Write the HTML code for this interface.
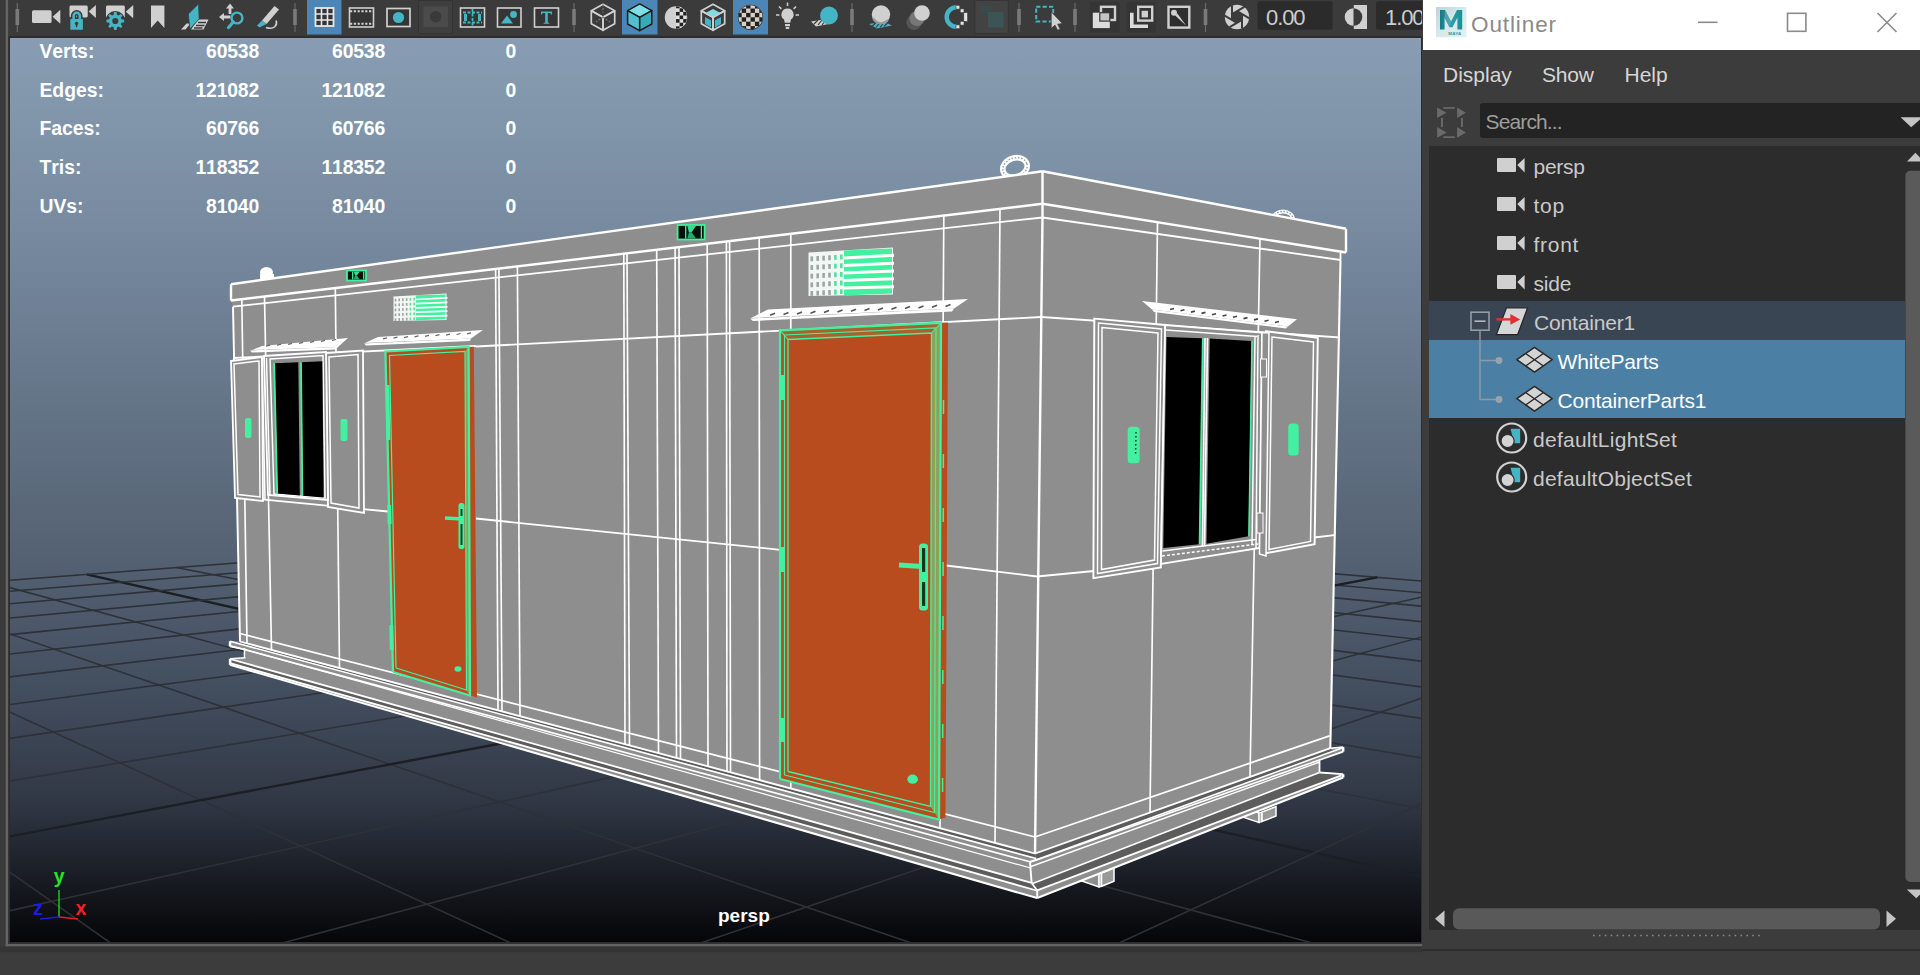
<!DOCTYPE html>
<html><head><meta charset="utf-8"><title>Maya Outliner</title>
<style>
html,body{margin:0;padding:0;background:#3c3c3c;}
body{width:1920px;height:975px;overflow:hidden;position:relative;font-family:"Liberation Sans",sans-serif;}
#root{position:absolute;left:0;top:0;width:1920px;height:975px;overflow:hidden;background:#3c3c3c;}
#scene{position:absolute;left:0;top:0;}
.hr{position:absolute;left:0;width:1920px;height:24px;color:#fff;font-weight:bold;font-size:19.4px;line-height:24px;font-kerning:none;}
.hl{position:absolute;left:39.4px;}
.hv{position:absolute;letter-spacing:-0.2px;}
#persp{position:absolute;left:718px;top:903.5px;color:#fff;font-weight:bold;font-size:19px;line-height:24px;}
</style></head><body>
<div id="root">
<svg id="scene" width="1423" height="975" viewBox="0 0 1423 975">
<defs>
<linearGradient id="bg" x1="0" y1="0" x2="0" y2="1">
<stop offset="0.0000" stop-color="#889db3"/><stop offset="0.2124" stop-color="#778aa0"/><stop offset="0.5442" stop-color="#576576"/><stop offset="0.6659" stop-color="#4a5667"/><stop offset="0.7544" stop-color="#3e4858"/><stop offset="0.8429" stop-color="#313845"/><stop offset="0.8982" stop-color="#212630"/><stop offset="0.9535" stop-color="#12141a"/><stop offset="1.0000" stop-color="#060608"/>
</linearGradient>
<clipPath id="vpclip"><rect x="10" y="38" width="1411" height="904"/></clipPath>
</defs>
<rect x="0" y="0" width="1423" height="975" fill="#3c3c3c"/>
<rect x="0" y="0" width="5.7" height="952" fill="#3a3a3a"/>
<rect x="5.7" y="0" width="2.6" height="946.5" fill="#656565"/>
<rect x="8.3" y="0" width="1415" height="38" fill="#3b3b3b"/>
<rect x="8.3" y="36" width="1415" height="908" fill="#2d2d2d"/>
<rect x="10" y="38" width="1411" height="904" fill="url(#bg)"/>
<g clip-path="url(#vpclip)">
<line x1="-1543.9" y1="699.5" x2="-22206.3" y2="7475.3" stroke="#2e3137" stroke-width="1.6"/>
<line x1="-1279.4" y1="679.2" x2="-18425.2" y2="8117.8" stroke="#2e3137" stroke-width="1.6"/>
<line x1="-1049.1" y1="661.5" x2="-13885.5" y2="8889.2" stroke="#2e3137" stroke-width="1.6"/>
<line x1="-846.8" y1="646.0" x2="-8333.4" y2="9832.6" stroke="#2e3137" stroke-width="1.6"/>
<line x1="-667.6" y1="632.3" x2="-1031.1" y2="5872.6" stroke="#2e3137" stroke-width="1.6"/>
<line x1="-507.9" y1="620.0" x2="3300.7" y2="6249.1" stroke="#2e3137" stroke-width="1.6"/>
<line x1="-364.6" y1="609.0" x2="8276.2" y2="6681.5" stroke="#2e3137" stroke-width="1.6"/>
<line x1="-235.2" y1="599.1" x2="14050.2" y2="7183.2" stroke="#2e3137" stroke-width="1.6"/>
<line x1="-118.0" y1="590.1" x2="20831.7" y2="7772.6" stroke="#2e3137" stroke-width="1.6"/>
<line x1="-11.1" y1="581.9" x2="8735.9" y2="2969.0" stroke="#2e3137" stroke-width="1.6"/>
<line x1="86.6" y1="574.4" x2="6188.6" y2="1957.4" stroke="#1c1f24" stroke-width="2.4"/>
<line x1="176.3" y1="567.5" x2="5083.0" y2="1518.4" stroke="#2e3137" stroke-width="1.6"/>
<line x1="259.0" y1="561.2" x2="4465.2" y2="1273.0" stroke="#2e3137" stroke-width="1.6"/>
<line x1="335.5" y1="555.3" x2="4070.6" y2="1116.3" stroke="#2e3137" stroke-width="1.6"/>
<line x1="406.3" y1="549.9" x2="3796.9" y2="1007.6" stroke="#2e3137" stroke-width="1.6"/>
<line x1="472.2" y1="544.8" x2="3595.8" y2="927.7" stroke="#2e3137" stroke-width="1.6"/>
<line x1="533.7" y1="540.1" x2="3441.8" y2="866.6" stroke="#2e3137" stroke-width="1.6"/>
<line x1="591.1" y1="535.7" x2="3320.2" y2="818.3" stroke="#2e3137" stroke-width="1.6"/>
<line x1="644.8" y1="531.6" x2="3221.6" y2="779.1" stroke="#2e3137" stroke-width="1.6"/>
<line x1="695.2" y1="527.7" x2="3140.2" y2="746.8" stroke="#2e3137" stroke-width="1.6"/>
<line x1="742.6" y1="524.1" x2="3071.7" y2="719.6" stroke="#2e3137" stroke-width="1.6"/>
<line x1="-1543.9" y1="699.5" x2="742.6" y2="524.1" stroke="#2e3137" stroke-width="1.6"/>
<line x1="-1619.0" y1="724.1" x2="787.7" y2="527.9" stroke="#2e3137" stroke-width="1.6"/>
<line x1="-1708.0" y1="753.3" x2="835.7" y2="531.9" stroke="#2e3137" stroke-width="1.6"/>
<line x1="-1815.1" y1="788.4" x2="887.0" y2="536.2" stroke="#2e3137" stroke-width="1.6"/>
<line x1="-1946.3" y1="831.4" x2="942.0" y2="540.8" stroke="#2e3137" stroke-width="1.6"/>
<line x1="-2110.8" y1="885.4" x2="1001.1" y2="545.8" stroke="#2e3137" stroke-width="1.6"/>
<line x1="-2323.3" y1="955.1" x2="1064.8" y2="551.1" stroke="#2e3137" stroke-width="1.6"/>
<line x1="-2608.2" y1="1048.5" x2="1133.5" y2="556.9" stroke="#2e3137" stroke-width="1.6"/>
<line x1="-3010.3" y1="1180.4" x2="1208.0" y2="563.1" stroke="#2e3137" stroke-width="1.6"/>
<line x1="-3620.3" y1="1380.4" x2="1288.9" y2="569.9" stroke="#2e3137" stroke-width="1.6"/>
<line x1="-4656.2" y1="1720.1" x2="1377.3" y2="577.4" stroke="#1c1f24" stroke-width="2.4"/>
<line x1="-6802.4" y1="2423.9" x2="1474.0" y2="585.5" stroke="#2e3137" stroke-width="1.6"/>
<line x1="-13906.9" y1="4753.7" x2="1580.4" y2="594.4" stroke="#2e3137" stroke-width="1.6"/>
<line x1="-19759.9" y1="7891.0" x2="1698.1" y2="604.3" stroke="#2e3137" stroke-width="1.6"/>
<line x1="-15496.7" y1="8615.4" x2="1828.8" y2="615.3" stroke="#2e3137" stroke-width="1.6"/>
<line x1="-10316.8" y1="9495.6" x2="1974.9" y2="627.5" stroke="#2e3137" stroke-width="1.6"/>
<line x1="-1031.1" y1="5872.6" x2="2139.4" y2="641.3" stroke="#2e3137" stroke-width="1.6"/>
<line x1="3300.7" y1="6249.1" x2="2325.8" y2="657.0" stroke="#2e3137" stroke-width="1.6"/>
<line x1="8276.2" y1="6681.5" x2="2538.8" y2="674.9" stroke="#2e3137" stroke-width="1.6"/>
<line x1="14050.2" y1="7183.2" x2="2784.7" y2="695.5" stroke="#2e3137" stroke-width="1.6"/>
<line x1="20831.7" y1="7772.6" x2="3071.7" y2="719.6" stroke="#2e3137" stroke-width="1.6"/>
<polygon points="1081.0,868.0 1099.0,874.0 1099.0,887.0 1081.0,880.7" fill="#8e8e8e" stroke="#ffffff" stroke-width="1.5" />
<polygon points="1099.0,874.0 1101.5,873.0 1101.5,886.3 1099.0,887.0" fill="#b5b5b5" stroke="#ffffff" stroke-width="1.2" />
<polygon points="1101.5,873.0 1114.0,868.0 1114.0,881.2 1101.5,886.3" fill="#999" stroke="#ffffff" stroke-width="1.5" />
<polygon points="1238.0,806.0 1259.0,813.0 1259.0,822.5 1238.0,815.5" fill="#8e8e8e" stroke="#ffffff" stroke-width="1.5" />
<polygon points="1259.0,813.0 1262.0,812.0 1262.0,821.5 1259.0,822.5" fill="#b5b5b5" stroke="#ffffff" stroke-width="1.2" />
<polygon points="1262.0,812.0 1276.0,806.5 1276.0,816.0 1262.0,821.5" fill="#999" stroke="#ffffff" stroke-width="1.5" />
<polygon points="240.0,641.5 1035.0,853.5 1330.3,748.2 1343.2,747.1 1343.2,751.6 1319.5,760.6 1319.5,772.0 1343.2,774.2 1343.2,777.5 1037.2,898.1 230.0,664.8 230.0,658.8 245.5,657.7 245.0,649.5 230.0,646.5 230.0,641.3" fill="#8e8e8e" stroke="none" stroke-width="1.5" />
<polygon points="1035.5,854.5 1330.5,749.0 1335.0,751.6 1037.2,859.5" fill="#5c5c5c" stroke="none" stroke-width="1.5" />
<polygon points="1032.7,883.5 1319.5,772.5 1341.5,775.3 1037.2,890.3" fill="#5c5c5c" stroke="none" stroke-width="1.5" />
<polygon points="232.0,659.6 1031.6,883.0 1036.5,890.5 232.0,663.0" fill="#5c5c5c" stroke="none" stroke-width="1.5" />
<polygon points="240.0,642.3 1035.0,854.5 1036.0,857.6 236.0,642.6" fill="#5c5c5c" stroke="none" stroke-width="1.5" />
<line x1="230.0" y1="641.3" x2="1036.0" y2="858.5" stroke="#ffffff" stroke-width="1.65" />
<line x1="230.0" y1="645.7" x2="1030.0" y2="861.8" stroke="#ffffff" stroke-width="1.65" />
<line x1="244.5" y1="649.5" x2="1030.5" y2="868.0" stroke="#ffffff" stroke-width="1.2" />
<line x1="230.0" y1="659.0" x2="1031.6" y2="882.8" stroke="#ffffff" stroke-width="1.8" />
<line x1="230.0" y1="663.2" x2="1036.5" y2="890.5" stroke="#ffffff" stroke-width="1.8" />
<line x1="230.0" y1="664.8" x2="1037.2" y2="898.1" stroke="#ffffff" stroke-width="2.1" />
<line x1="230.0" y1="641.3" x2="230.0" y2="646.5" stroke="#ffffff" stroke-width="2.4" />
<line x1="230.0" y1="658.8" x2="230.0" y2="664.8" stroke="#ffffff" stroke-width="2.4" />
<line x1="230.0" y1="658.8" x2="245.5" y2="657.7" stroke="#ffffff" stroke-width="1.65" />
<line x1="230.0" y1="646.5" x2="245.0" y2="649.5" stroke="#ffffff" stroke-width="1.5" />
<line x1="244.5" y1="648.0" x2="244.5" y2="658.0" stroke="#ffffff" stroke-width="1.65" />
<line x1="1030.0" y1="861.8" x2="1031.6" y2="883.0" stroke="#ffffff" stroke-width="1.95" />
<line x1="1031.6" y1="883.0" x2="1037.2" y2="890.5" stroke="#ffffff" stroke-width="1.8" />
<line x1="1037.2" y1="890.5" x2="1037.2" y2="898.1" stroke="#ffffff" stroke-width="1.95" />
<line x1="1030.0" y1="861.5" x2="1037.2" y2="859.6" stroke="#ffffff" stroke-width="1.8" />
<line x1="1037.2" y1="859.6" x2="1343.2" y2="747.6" stroke="#ffffff" stroke-width="1.65" />
<line x1="1030.0" y1="862.3" x2="1343.2" y2="751.6" stroke="#ffffff" stroke-width="1.65" />
<line x1="1031.0" y1="866.5" x2="1319.5" y2="762.0" stroke="#ffffff" stroke-width="1.35" />
<line x1="1032.7" y1="883.5" x2="1319.5" y2="772.5" stroke="#ffffff" stroke-width="1.8" />
<line x1="1037.2" y1="890.3" x2="1341.5" y2="775.3" stroke="#ffffff" stroke-width="1.8" />
<line x1="1037.2" y1="898.1" x2="1343.2" y2="777.5" stroke="#ffffff" stroke-width="2.1" />
<line x1="1343.2" y1="747.1" x2="1343.2" y2="751.6" stroke="#ffffff" stroke-width="2.4" />
<line x1="1343.2" y1="774.2" x2="1343.2" y2="777.5" stroke="#ffffff" stroke-width="2.4" />
<line x1="1319.5" y1="760.6" x2="1319.5" y2="772.0" stroke="#ffffff" stroke-width="1.8" />
<line x1="1319.5" y1="772.5" x2="1343.2" y2="774.2" stroke="#ffffff" stroke-width="1.8" />
<line x1="1330.3" y1="748.2" x2="1343.2" y2="747.1" stroke="#ffffff" stroke-width="1.65" />
<polygon points="233.0,306.7 1042.5,217.5 1035.0,853.5 240.0,641.5" fill="#8e8e8e" stroke="none" stroke-width="1.5" />
<polygon points="1042.5,217.5 1340.5,260.0 1330.3,748.2 1035.0,853.5" fill="#8e8e8e" stroke="none" stroke-width="1.5" />
<polygon points="231.0,284.2 1042.5,171.3 1346.0,228.8 1346.0,252.5 1340.5,253.0 1340.5,260.0 1042.5,217.5 233.0,306.7 231.0,300.5" fill="#8e8e8e" stroke="none" stroke-width="1.5" />
<g transform="rotate(-18 1015.0 167.5)"><ellipse cx="1015.0" cy="167.5" rx="12.5" ry="9.5" fill="none" stroke="#fff" stroke-width="5.6"/><ellipse cx="1015.0" cy="167.5" rx="12.5" ry="9.5" fill="none" stroke="#9aa0a8" stroke-width="1.4" stroke-dasharray="1.6 1.6"/></g>
<g transform="rotate(0 1283.0 219.0)"><ellipse cx="1283.0" cy="219.0" rx="10.0" ry="7.5" fill="none" stroke="#fff" stroke-width="3.8"/><ellipse cx="1283.0" cy="219.0" rx="10.0" ry="7.5" fill="none" stroke="#9aa0a8" stroke-width="1.4" stroke-dasharray="1.6 1.6"/></g>
<ellipse cx="266.5" cy="272.5" rx="6.5" ry="5.5" fill="#fff"/><rect x="260" y="274" width="14" height="5" fill="#fff"/>
<polygon points="231.0,284.2 1042.5,171.3 1346.0,228.8 1346.0,252.5 1042.5,203.8 231.0,300.5" fill="#8e8e8e" stroke="none" stroke-width="1.5" />
<line x1="231.0" y1="284.2" x2="1042.5" y2="171.3" stroke="#ffffff" stroke-width="2.4" />
<line x1="231.0" y1="300.5" x2="1042.5" y2="203.8" stroke="#ffffff" stroke-width="2.4" />
<line x1="233.0" y1="306.7" x2="1042.5" y2="217.5" stroke="#ffffff" stroke-width="1.8" />
<line x1="1042.5" y1="171.3" x2="1346.0" y2="228.8" stroke="#ffffff" stroke-width="2.4" />
<line x1="1042.5" y1="203.8" x2="1346.0" y2="252.5" stroke="#ffffff" stroke-width="2.4" />
<line x1="1042.5" y1="217.5" x2="1340.5" y2="260.0" stroke="#ffffff" stroke-width="1.8" />
<line x1="231.0" y1="284.2" x2="231.0" y2="300.5" stroke="#ffffff" stroke-width="2.4" />
<line x1="1346.0" y1="228.8" x2="1346.0" y2="252.5" stroke="#ffffff" stroke-width="2.4" />
<line x1="1042.5" y1="171.3" x2="1042.5" y2="217.5" stroke="#ffffff" stroke-width="2.4" />
<line x1="233.0" y1="306.7" x2="240.0" y2="641.5" stroke="#ffffff" stroke-width="1.95" />
<line x1="1042.5" y1="217.5" x2="1035.0" y2="853.5" stroke="#ffffff" stroke-width="2.4" />
<line x1="1340.5" y1="260.0" x2="1330.3" y2="748.2" stroke="#ffffff" stroke-width="2.1" />
<line x1="240.0" y1="641.5" x2="1035.0" y2="853.5" stroke="#ffffff" stroke-width="1.8" />
<line x1="1035.0" y1="853.5" x2="1330.3" y2="748.2" stroke="#ffffff" stroke-width="1.8" />
<line x1="240.0" y1="633.5" x2="1035.0" y2="837.0" stroke="#ffffff" stroke-width="1.8" />
<line x1="1035.0" y1="837.0" x2="1329.5" y2="735.8" stroke="#ffffff" stroke-width="1.8" />
<line x1="1340.5" y1="253.0" x2="1340.5" y2="260.0" stroke="#ffffff" stroke-width="1.8" />
<line x1="241.8" y1="299.2" x2="247.0" y2="643.4" stroke="#ffffff" stroke-width="1.65" />
<line x1="264.5" y1="296.5" x2="271.5" y2="649.9" stroke="#ffffff" stroke-width="1.65" />
<line x1="335.3" y1="288.1" x2="339.5" y2="668.0" stroke="#ffffff" stroke-width="1.65" />
<line x1="495.6" y1="269.0" x2="498.0" y2="710.3" stroke="#ffffff" stroke-width="1.65" />
<line x1="498.9" y1="268.6" x2="502.0" y2="711.4" stroke="#ffffff" stroke-width="1.65" />
<line x1="517.4" y1="266.4" x2="520.0" y2="716.2" stroke="#ffffff" stroke-width="1.65" />
<line x1="623.8" y1="253.7" x2="625.0" y2="744.2" stroke="#ffffff" stroke-width="1.65" />
<line x1="627.0" y1="253.3" x2="629.5" y2="745.4" stroke="#ffffff" stroke-width="1.65" />
<line x1="656.7" y1="249.8" x2="658.5" y2="753.1" stroke="#ffffff" stroke-width="1.65" />
<line x1="675.1" y1="247.6" x2="676.5" y2="757.9" stroke="#ffffff" stroke-width="1.65" />
<line x1="679.0" y1="247.1" x2="680.5" y2="759.0" stroke="#ffffff" stroke-width="1.65" />
<line x1="707.2" y1="243.8" x2="708.0" y2="766.3" stroke="#ffffff" stroke-width="1.65" />
<line x1="726.4" y1="241.5" x2="727.0" y2="771.4" stroke="#ffffff" stroke-width="1.65" />
<line x1="729.6" y1="241.1" x2="730.5" y2="772.3" stroke="#ffffff" stroke-width="1.65" />
<line x1="759.2" y1="237.6" x2="759.6" y2="780.1" stroke="#ffffff" stroke-width="1.65" />
<line x1="790.8" y1="233.8" x2="790.8" y2="788.4" stroke="#ffffff" stroke-width="1.65" />
<line x1="943.8" y1="215.6" x2="940.0" y2="828.2" stroke="#ffffff" stroke-width="1.65" />
<line x1="1000.0" y1="208.9" x2="995.0" y2="842.8" stroke="#ffffff" stroke-width="1.65" />
<line x1="1157.5" y1="222.3" x2="1150.0" y2="812.5" stroke="#ffffff" stroke-width="1.65" />
<line x1="1260.0" y1="238.7" x2="1250.0" y2="776.8" stroke="#ffffff" stroke-width="1.65" />
<line x1="233.0" y1="358.0" x2="476.0" y2="346.0" stroke="#ffffff" stroke-width="1.8" />
<line x1="476.0" y1="346.5" x2="1041.5" y2="317.0" stroke="#ffffff" stroke-width="1.8" />
<line x1="1041.5" y1="317.0" x2="1340.0" y2="337.5" stroke="#ffffff" stroke-width="1.8" />
<line x1="238.0" y1="497.0" x2="388.0" y2="511.5" stroke="#ffffff" stroke-width="1.8" />
<line x1="476.0" y1="518.5" x2="780.0" y2="549.8" stroke="#ffffff" stroke-width="1.8" />
<line x1="946.0" y1="565.5" x2="1037.0" y2="576.5" stroke="#ffffff" stroke-width="1.8" />
<line x1="1037.0" y1="576.5" x2="1094.0" y2="571.0" stroke="#ffffff" stroke-width="1.8" />
<line x1="1314.0" y1="537.5" x2="1334.5" y2="535.2" stroke="#ffffff" stroke-width="1.8" />
<polygon points="231.0,361.0 262.0,357.0 263.0,501.0 235.0,498.0" fill="#8e8e8e" stroke="#ffffff" stroke-width="1.8" />
<polygon points="234.0,364.0 259.0,361.0 260.0,497.0 238.0,494.5" fill="none" stroke="#ffffff" stroke-width="1.5" />
<polygon points="326.0,353.0 363.0,350.5 364.0,513.0 328.0,507.0" fill="#8e8e8e" stroke="#ffffff" stroke-width="1.8" />
<polygon points="329.0,357.0 358.0,354.5 359.0,508.0 331.0,503.0" fill="none" stroke="#ffffff" stroke-width="1.5" />
<polygon points="264.0,356.0 326.0,352.0 328.0,500.0 268.0,495.0" fill="#8e8e8e" stroke="#ffffff" stroke-width="1.8" />
<polygon points="270.0,359.0 323.0,355.5 325.0,498.0 274.0,494.0" fill="none" stroke="#ffffff" stroke-width="1.5" />
<polygon points="274.6,363.3 298.3,362.3 299.8,495.5 277.5,493.5" fill="#000" stroke="none" stroke-width="1.5" />
<polygon points="301.4,362.3 322.3,361.2 323.6,497.5 302.8,495.8" fill="#000" stroke="none" stroke-width="1.5" />
<line x1="274.2" y1="363.3" x2="277.2" y2="493.5" stroke="#43f0a0" stroke-width="1.8" />
<line x1="301.0" y1="362.3" x2="302.4" y2="495.8" stroke="#43f0a0" stroke-width="1.8" />
<line x1="266.5" y1="358.0" x2="270.0" y2="496.0" stroke="#ffffff" stroke-width="1.5" />
<line x1="262.0" y1="358.0" x2="265.0" y2="500.0" stroke="#ffffff" stroke-width="1.5" />
<rect x="245" y="418" width="6.5" height="20" rx="2" fill="#43f0a0"/>
<rect x="340.5" y="419" width="7" height="22" rx="2" fill="#43f0a0"/>
<polygon points="252.0,350.0 262.0,346.0 348.0,338.0 338.0,347.0" fill="#ffffff" stroke="none" stroke-width="1.5" />
<polygon points="250.0,350.5 338.0,347.0 336.0,349.5 252.0,352.5" fill="#ffffff" stroke="none" stroke-width="1.5" />
<line x1="266.0" y1="346.2" x2="270.0" y2="345.2" stroke="#666" stroke-width="1.2" />
<line x1="277.0" y1="345.2" x2="281.0" y2="344.2" stroke="#666" stroke-width="1.2" />
<line x1="288.0" y1="344.3" x2="292.0" y2="343.3" stroke="#666" stroke-width="1.2" />
<line x1="299.0" y1="343.3" x2="303.0" y2="342.3" stroke="#666" stroke-width="1.2" />
<line x1="310.0" y1="342.4" x2="314.0" y2="341.4" stroke="#666" stroke-width="1.2" />
<line x1="321.0" y1="341.4" x2="325.0" y2="340.4" stroke="#666" stroke-width="1.2" />
<line x1="332.0" y1="340.5" x2="336.0" y2="339.5" stroke="#666" stroke-width="1.2" />
<polygon points="385.4,351.5 468.6,347.0 473.8,346.8 477.0,697.5 470.0,695.5 393.0,672.0" fill="#b84c1f" stroke="none" stroke-width="1.5" />
<polygon points="465.0,351.5 468.6,347.0 470.0,695.5 466.5,690.0" fill="#8fa05a" stroke="none" stroke-width="1.5" />
<polyline points="393.0,672.0 385.4,351.5 468.6,347.0 470.0,695.5 393.0,672.0" fill="none" stroke="#43f0a0" stroke-width="2.25" />
<polyline points="396.0,668.0 389.5,355.5 465.0,351.5 466.5,690.0 396.0,668.0" fill="none" stroke="#43f0a0" stroke-width="1.2" />
<line x1="387.5" y1="385.0" x2="388.3" y2="440.0" stroke="#43f0a0" stroke-width="3.9" />
<line x1="391.3" y1="625.0" x2="391.8" y2="650.0" stroke="#43f0a0" stroke-width="3.9" />
<line x1="389.2" y1="505.0" x2="389.6" y2="524.0" stroke="#43f0a0" stroke-width="3.9" />
<line x1="445.0" y1="518.0" x2="462.0" y2="519.0" stroke="#43f0a0" stroke-width="3.75" />
<rect x="458.5" y="503" width="6" height="46" rx="2.5" fill="#43f0a0"/>
<line x1="461.5" y1="509.0" x2="461.5" y2="516.0" stroke="#0a3a22" stroke-width="1.95" />
<line x1="461.5" y1="524.0" x2="461.5" y2="545.0" stroke="#0a3a22" stroke-width="1.95" />
<ellipse cx="458" cy="669" rx="3.5" ry="2.8" fill="#43f0a0"/>
<polygon points="365.0,343.0 378.0,337.0 483.0,330.0 471.0,338.5" fill="#ffffff" stroke="none" stroke-width="1.5" />
<polygon points="364.0,343.5 471.0,338.5 470.0,341.0 366.0,345.5" fill="#ffffff" stroke="none" stroke-width="1.5" />
<line x1="383.0" y1="338.8" x2="387.0" y2="337.8" stroke="#666" stroke-width="1.2" />
<line x1="393.5" y1="338.2" x2="397.5" y2="337.2" stroke="#666" stroke-width="1.2" />
<line x1="404.0" y1="337.6" x2="408.0" y2="336.6" stroke="#666" stroke-width="1.2" />
<line x1="414.5" y1="336.9" x2="418.5" y2="335.9" stroke="#666" stroke-width="1.2" />
<line x1="425.0" y1="336.3" x2="429.0" y2="335.3" stroke="#666" stroke-width="1.2" />
<line x1="435.5" y1="335.7" x2="439.5" y2="334.7" stroke="#666" stroke-width="1.2" />
<line x1="446.0" y1="335.1" x2="450.0" y2="334.1" stroke="#666" stroke-width="1.2" />
<line x1="456.5" y1="334.5" x2="460.5" y2="333.5" stroke="#666" stroke-width="1.2" />
<line x1="467.0" y1="333.8" x2="471.0" y2="332.8" stroke="#666" stroke-width="1.2" />
<g>
<polygon points="393.5,296.5 446.5,293.5 446.5,320.1 393.5,321.0" fill="#f4f6f5" stroke="none" stroke-width="1.5" />
<polygon points="415.8,295.2 445.5,294.5 445.5,319.1 415.8,320.6" fill="#43f0a0" stroke="none" stroke-width="1.5" />
<line x1="415.8" y1="299.5" x2="447.5" y2="297.9" stroke="#fff" stroke-width="1.72"/>
<line x1="415.8" y1="303.7" x2="447.5" y2="302.4" stroke="#fff" stroke-width="1.72"/>
<line x1="415.8" y1="307.9" x2="447.5" y2="306.8" stroke="#fff" stroke-width="1.72"/>
<line x1="415.8" y1="312.2" x2="447.5" y2="311.2" stroke="#fff" stroke-width="1.72"/>
<line x1="415.8" y1="316.4" x2="447.5" y2="315.7" stroke="#fff" stroke-width="1.72"/>
<rect x="394.7" y="298.7" width="1.6" height="2.8" fill="#9aa8a2"/>
<rect x="394.7" y="303.6" width="1.6" height="2.8" fill="#9aa8a2"/>
<rect x="394.7" y="308.5" width="1.6" height="2.8" fill="#9aa8a2"/>
<rect x="394.7" y="313.4" width="1.6" height="2.8" fill="#9aa8a2"/>
<rect x="394.7" y="318.3" width="1.6" height="2.8" fill="#9aa8a2"/>
<rect x="398.4" y="298.5" width="1.6" height="2.8" fill="#9aa8a2"/>
<rect x="398.4" y="303.4" width="1.6" height="2.8" fill="#9aa8a2"/>
<rect x="398.4" y="308.3" width="1.6" height="2.8" fill="#9aa8a2"/>
<rect x="398.4" y="313.2" width="1.6" height="2.8" fill="#9aa8a2"/>
<rect x="398.4" y="318.1" width="1.6" height="2.8" fill="#9aa8a2"/>
<rect x="402.1" y="298.3" width="1.6" height="2.8" fill="#9aa8a2"/>
<rect x="402.1" y="303.2" width="1.6" height="2.8" fill="#9aa8a2"/>
<rect x="402.1" y="308.1" width="1.6" height="2.8" fill="#9aa8a2"/>
<rect x="402.1" y="313.0" width="1.6" height="2.8" fill="#9aa8a2"/>
<rect x="402.1" y="317.9" width="1.6" height="2.8" fill="#9aa8a2"/>
<rect x="405.9" y="298.1" width="1.6" height="2.8" fill="#9aa8a2"/>
<rect x="405.9" y="303.0" width="1.6" height="2.8" fill="#9aa8a2"/>
<rect x="405.9" y="307.9" width="1.6" height="2.8" fill="#9aa8a2"/>
<rect x="405.9" y="312.8" width="1.6" height="2.8" fill="#9aa8a2"/>
<rect x="405.9" y="317.7" width="1.6" height="2.8" fill="#9aa8a2"/>
<rect x="409.6" y="297.9" width="1.6" height="2.8" fill="#55e0a0"/>
<rect x="409.6" y="302.8" width="1.6" height="2.8" fill="#55e0a0"/>
<rect x="409.6" y="307.7" width="1.6" height="2.8" fill="#55e0a0"/>
<rect x="409.6" y="312.6" width="1.6" height="2.8" fill="#55e0a0"/>
<rect x="409.6" y="317.5" width="1.6" height="2.8" fill="#55e0a0"/>
<rect x="413.3" y="297.7" width="1.6" height="2.8" fill="#55e0a0"/>
<rect x="413.3" y="302.6" width="1.6" height="2.8" fill="#55e0a0"/>
<rect x="413.3" y="307.5" width="1.6" height="2.8" fill="#55e0a0"/>
<rect x="413.3" y="312.4" width="1.6" height="2.8" fill="#55e0a0"/>
<rect x="413.3" y="317.3" width="1.6" height="2.8" fill="#55e0a0"/>
</g>
<g>
<polygon points="808.5,252.5 893.0,247.5 893.0,294.5 808.5,296.0" fill="#f4f6f5" stroke="none" stroke-width="1.5" />
<polygon points="844.0,250.4 892.0,248.5 892.0,293.5 844.0,295.4" fill="#43f0a0" stroke="none" stroke-width="1.5" />
<line x1="844.0" y1="257.9" x2="894.0" y2="255.3" stroke="#fff" stroke-width="3.03"/>
<line x1="844.0" y1="265.4" x2="894.0" y2="263.2" stroke="#fff" stroke-width="3.03"/>
<line x1="844.0" y1="272.9" x2="894.0" y2="271.0" stroke="#fff" stroke-width="3.03"/>
<line x1="844.0" y1="280.4" x2="894.0" y2="278.8" stroke="#fff" stroke-width="3.03"/>
<line x1="844.0" y1="287.9" x2="894.0" y2="286.7" stroke="#fff" stroke-width="3.03"/>
<rect x="810.5" y="256.4" width="2.6" height="4.9" fill="#9aa8a2"/>
<rect x="810.5" y="265.1" width="2.6" height="4.9" fill="#9aa8a2"/>
<rect x="810.5" y="273.7" width="2.6" height="4.9" fill="#9aa8a2"/>
<rect x="810.5" y="282.4" width="2.6" height="4.9" fill="#9aa8a2"/>
<rect x="810.5" y="291.0" width="2.6" height="4.9" fill="#9aa8a2"/>
<rect x="816.4" y="256.0" width="2.6" height="4.9" fill="#9aa8a2"/>
<rect x="816.4" y="264.7" width="2.6" height="4.9" fill="#9aa8a2"/>
<rect x="816.4" y="273.4" width="2.6" height="4.9" fill="#9aa8a2"/>
<rect x="816.4" y="282.0" width="2.6" height="4.9" fill="#9aa8a2"/>
<rect x="816.4" y="290.7" width="2.6" height="4.9" fill="#9aa8a2"/>
<rect x="822.3" y="255.7" width="2.6" height="4.9" fill="#9aa8a2"/>
<rect x="822.3" y="264.4" width="2.6" height="4.9" fill="#9aa8a2"/>
<rect x="822.3" y="273.0" width="2.6" height="4.9" fill="#9aa8a2"/>
<rect x="822.3" y="281.7" width="2.6" height="4.9" fill="#9aa8a2"/>
<rect x="822.3" y="290.3" width="2.6" height="4.9" fill="#9aa8a2"/>
<rect x="828.2" y="255.3" width="2.6" height="4.9" fill="#9aa8a2"/>
<rect x="828.2" y="264.0" width="2.6" height="4.9" fill="#9aa8a2"/>
<rect x="828.2" y="272.7" width="2.6" height="4.9" fill="#9aa8a2"/>
<rect x="828.2" y="281.3" width="2.6" height="4.9" fill="#9aa8a2"/>
<rect x="828.2" y="290.0" width="2.6" height="4.9" fill="#9aa8a2"/>
<rect x="834.1" y="255.0" width="2.6" height="4.9" fill="#55e0a0"/>
<rect x="834.1" y="263.7" width="2.6" height="4.9" fill="#55e0a0"/>
<rect x="834.1" y="272.3" width="2.6" height="4.9" fill="#55e0a0"/>
<rect x="834.1" y="281.0" width="2.6" height="4.9" fill="#55e0a0"/>
<rect x="834.1" y="289.6" width="2.6" height="4.9" fill="#55e0a0"/>
<rect x="840.0" y="254.6" width="2.6" height="4.9" fill="#55e0a0"/>
<rect x="840.0" y="263.3" width="2.6" height="4.9" fill="#55e0a0"/>
<rect x="840.0" y="272.0" width="2.6" height="4.9" fill="#55e0a0"/>
<rect x="840.0" y="280.6" width="2.6" height="4.9" fill="#55e0a0"/>
<rect x="840.0" y="289.3" width="2.6" height="4.9" fill="#55e0a0"/>
</g>
<polygon points="780.0,330.3 941.0,322.8 948.0,322.5 945.5,817.5 939.0,819.5 780.0,779.0" fill="#b84c1f" stroke="none" stroke-width="1.5" />
<polygon points="931.5,333.0 941.0,322.8 939.0,819.5 930.5,806.5" fill="#8fa05a" stroke="none" stroke-width="1.5" />
<polygon points="788.0,339.5 931.5,333.0 941.0,322.8 780.0,330.3" fill="#a8632c" stroke="none" stroke-width="1.5" />
<polyline points="780.0,779.0 780.0,330.3 941.0,322.8 939.0,819.5 780.0,779.0" fill="none" stroke="#43f0a0" stroke-width="2.25" />
<polyline points="784.5,775.0 784.5,335.0 936.0,328.0 934.5,812.5 784.5,775.0" fill="none" stroke="#43f0a0" stroke-width="1.2" />
<polyline points="788.0,771.5 788.0,339.5 931.5,333.0 930.5,806.5 788.0,771.5" fill="none" stroke="#43f0a0" stroke-width="1.35" />
<line x1="780.0" y1="330.3" x2="788.0" y2="339.5" stroke="#43f0a0" stroke-width="1.05" />
<line x1="941.0" y1="322.8" x2="931.5" y2="333.0" stroke="#43f0a0" stroke-width="1.05" />
<line x1="781.8" y1="375.0" x2="781.8" y2="400.0" stroke="#43f0a0" stroke-width="5.1" />
<line x1="781.8" y1="547.0" x2="781.8" y2="572.0" stroke="#43f0a0" stroke-width="5.1" />
<line x1="781.8" y1="718.0" x2="781.8" y2="742.0" stroke="#43f0a0" stroke-width="5.1" />
<line x1="943.5" y1="400.0" x2="942.5" y2="820.0" stroke="#43f0a0" stroke-width="1.5" stroke-dasharray="14 40"/>
<line x1="899.0" y1="565.0" x2="922.0" y2="566.5" stroke="#43f0a0" stroke-width="4.8" />
<rect x="919" y="543.5" width="9" height="67" rx="3.5" fill="#43f0a0"/>
<rect x="922" y="548" width="3.2" height="24" fill="#0a3a22"/><rect x="922" y="582" width="3.2" height="24" fill="#0a3a22"/>
<ellipse cx="912.6" cy="779.2" rx="5.3" ry="4.6" fill="#43f0a0"/>
<polygon points="751.0,318.0 768.0,309.5 968.0,299.0 954.0,308.5" fill="#ffffff" stroke="none" stroke-width="1.5" />
<polygon points="750.0,318.5 954.0,308.5 952.0,311.5 753.0,321.0" fill="#ffffff" stroke="none" stroke-width="1.5" />
<line x1="770.0" y1="315.2" x2="775.0" y2="313.2" stroke="#555" stroke-width="1.65" />
<line x1="783.5" y1="314.5" x2="788.5" y2="312.5" stroke="#555" stroke-width="1.65" />
<line x1="797.0" y1="313.9" x2="802.0" y2="311.9" stroke="#555" stroke-width="1.65" />
<line x1="810.5" y1="313.2" x2="815.5" y2="311.2" stroke="#555" stroke-width="1.65" />
<line x1="824.0" y1="312.6" x2="829.0" y2="310.6" stroke="#555" stroke-width="1.65" />
<line x1="837.5" y1="311.9" x2="842.5" y2="309.9" stroke="#555" stroke-width="1.65" />
<line x1="851.0" y1="311.2" x2="856.0" y2="309.2" stroke="#555" stroke-width="1.65" />
<line x1="864.5" y1="310.6" x2="869.5" y2="308.6" stroke="#555" stroke-width="1.65" />
<line x1="878.0" y1="309.9" x2="883.0" y2="307.9" stroke="#555" stroke-width="1.65" />
<line x1="891.5" y1="309.3" x2="896.5" y2="307.3" stroke="#555" stroke-width="1.65" />
<line x1="905.0" y1="308.6" x2="910.0" y2="306.6" stroke="#555" stroke-width="1.65" />
<line x1="918.5" y1="307.9" x2="923.5" y2="305.9" stroke="#555" stroke-width="1.65" />
<line x1="932.0" y1="307.3" x2="937.0" y2="305.3" stroke="#555" stroke-width="1.65" />
<line x1="945.5" y1="306.6" x2="950.5" y2="304.6" stroke="#555" stroke-width="1.65" />
<g><rect x="347.0" y="270.5" width="19.0" height="10.0" fill="#04120b" stroke="#43f0a0" stroke-width="1.8"/>
<polygon points="353.8,271.5 359.9,271.5 356.9,275.5 355.0,275.5" fill="#3ad890"/>
<polygon points="353.8,279.5 359.9,279.5 356.9,275.5 355.0,275.5" fill="#2aa870"/>
<line x1="352.7" y1="271.5" x2="352.7" y2="279.5" stroke="#43f0a0" stroke-width="1.3"/>
<line x1="363.7" y1="271.5" x2="363.7" y2="279.5" stroke="#43f0a0" stroke-width="1.3"/>
</g>
<g><rect x="677.6" y="225.0" width="27.0" height="14.5" fill="#04120b" stroke="#43f0a0" stroke-width="1.8"/>
<polygon points="687.3,226.0 696.0,226.0 691.6,232.2 688.9,232.2" fill="#3ad890"/>
<polygon points="687.3,238.5 696.0,238.5 691.6,232.2 688.9,232.2" fill="#2aa870"/>
<line x1="685.7" y1="226.0" x2="685.7" y2="238.5" stroke="#43f0a0" stroke-width="1.3"/>
<line x1="701.4" y1="226.0" x2="701.4" y2="238.5" stroke="#43f0a0" stroke-width="1.3"/>
</g>
<polygon points="1094.3,318.6 1165.2,325.0 1160.8,567.5 1093.4,578.2" fill="#8e8e8e" stroke="#ffffff" stroke-width="1.95" />
<polygon points="1098.5,323.0 1161.5,329.0 1157.5,563.5 1097.5,573.5" fill="none" stroke="#ffffff" stroke-width="1.5" />
<polygon points="1102.0,327.5 1158.0,333.0 1154.5,560.0 1101.5,569.5" fill="none" stroke="#ffffff" stroke-width="1.5" />
<polygon points="1165.2,325.0 1262.0,332.5 1259.5,548.0 1161.0,564.0" fill="#8e8e8e" stroke="#ffffff" stroke-width="1.8" />
<polygon points="1166.5,337.0 1202.4,338.3 1199.2,544.3 1163.3,548.0" fill="#000" stroke="none" stroke-width="1.5" />
<polygon points="1209.7,338.5 1251.6,340.9 1248.5,536.3 1206.5,543.7" fill="#000" stroke="none" stroke-width="1.5" />
<line x1="1202.8" y1="338.3" x2="1199.6" y2="544.3" stroke="#43f0a0" stroke-width="1.8" />
<line x1="1252.0" y1="341.0" x2="1248.9" y2="536.3" stroke="#43f0a0" stroke-width="1.5" />
<line x1="1166.0" y1="330.0" x2="1257.0" y2="336.5" stroke="#ffffff" stroke-width="1.5" />
<line x1="1205.0" y1="338.0" x2="1202.5" y2="546.0" stroke="#ffffff" stroke-width="1.65" />
<line x1="1207.5" y1="338.0" x2="1204.5" y2="546.0" stroke="#ffffff" stroke-width="1.65" />
<line x1="1255.0" y1="337.0" x2="1252.0" y2="545.0" stroke="#ffffff" stroke-width="1.5" />
<line x1="1258.0" y1="335.0" x2="1256.0" y2="548.0" stroke="#ffffff" stroke-width="1.5" />
<line x1="1162.5" y1="551.0" x2="1256.0" y2="539.5" stroke="#ffffff" stroke-width="1.5" />
<line x1="1162.0" y1="556.0" x2="1258.0" y2="544.0" stroke="#ffffff" stroke-width="1.5" stroke-dasharray="3 2"/>
<polygon points="1266.0,331.3 1317.8,337.7 1314.6,544.3 1262.8,553.8" fill="#8e8e8e" stroke="#ffffff" stroke-width="1.95" />
<polygon points="1272.0,337.0 1313.5,342.0 1310.5,541.5 1269.0,549.5" fill="none" stroke="#ffffff" stroke-width="1.5" />
<polygon points="1262.0,332.5 1269.0,333.0 1266.0,556.0 1259.5,554.0" fill="#8e8e8e" stroke="#ffffff" stroke-width="1.5" />
<rect x="1260.5" y="359" width="6" height="18" fill="#8e8e8e" stroke="#fff" stroke-width="1"/>
<rect x="1257" y="513" width="6" height="20" fill="#8e8e8e" stroke="#fff" stroke-width="1"/>
<rect x="1127.7" y="426.7" width="12" height="36.5" rx="3.5" fill="#43f0a0"/>
<line x1="1136.0" y1="432.0" x2="1135.5" y2="456.0" stroke="#0a3a22" stroke-width="1.5" stroke-dasharray="1.5 2.5"/>
<rect x="1288.2" y="423.5" width="10.5" height="32" rx="3.5" fill="#43f0a0"/>
<polygon points="1142.0,301.0 1152.0,309.5 1288.0,326.5 1297.0,319.2" fill="#ffffff" stroke="none" stroke-width="1.5" />
<polygon points="1152.0,309.5 1288.0,326.5 1286.0,328.5 1154.0,312.0" fill="#ffffff" stroke="none" stroke-width="1.5" />
<line x1="1170.0" y1="309.5" x2="1174.0" y2="308.5" stroke="#444" stroke-width="1.65" />
<line x1="1180.5" y1="310.8" x2="1184.5" y2="309.8" stroke="#444" stroke-width="1.65" />
<line x1="1191.0" y1="312.1" x2="1195.0" y2="311.1" stroke="#444" stroke-width="1.65" />
<line x1="1201.5" y1="313.4" x2="1205.5" y2="312.4" stroke="#444" stroke-width="1.65" />
<line x1="1212.0" y1="314.7" x2="1216.0" y2="313.7" stroke="#444" stroke-width="1.65" />
<line x1="1222.5" y1="316.0" x2="1226.5" y2="315.0" stroke="#444" stroke-width="1.65" />
<line x1="1233.0" y1="317.3" x2="1237.0" y2="316.3" stroke="#444" stroke-width="1.65" />
<line x1="1243.5" y1="318.6" x2="1247.5" y2="317.6" stroke="#444" stroke-width="1.65" />
<line x1="1254.0" y1="319.9" x2="1258.0" y2="318.9" stroke="#444" stroke-width="1.65" />
<line x1="1264.5" y1="321.2" x2="1268.5" y2="320.2" stroke="#444" stroke-width="1.65" />
<line x1="1275.0" y1="322.5" x2="1279.0" y2="321.5" stroke="#444" stroke-width="1.65" />
<g font-family="Liberation Sans, sans-serif" font-weight="bold" font-size="19.5">
<line x1="59" y1="917" x2="59" y2="890" stroke="#1fe01f" stroke-width="1.3"/>
<line x1="59" y1="917" x2="78" y2="919" stroke="#e02020" stroke-width="1.4"/>
<line x1="59" y1="917" x2="40" y2="919" stroke="#1c1ce0" stroke-width="1.4"/>
<text x="53.8" y="883" fill="#22e622">y</text>
<text x="75.6" y="915.2" fill="#ee2222">x</text>
<text x="33" y="915.2" fill="#1a1aee">z</text>
</g>
</g>
<rect x="5.7" y="943.9" width="1417.3" height="2.6" fill="#646464"/>
<rect x="0" y="946.5" width="1423" height="6" fill="#343434"/>
<rect x="0" y="952.5" width="1423" height="23" fill="#3c3c3c"/>
<line x1="17.3" y1="3" x2="17.3" y2="32" stroke="#6a6a6a" stroke-width="1.2"/><rect x="15.5" y="9" width="3.6" height="16" fill="#7a7a7a"/>
<line x1="295.0" y1="3" x2="295.0" y2="32" stroke="#6a6a6a" stroke-width="1.2"/><rect x="293.2" y="9" width="3.6" height="16" fill="#7a7a7a"/>
<line x1="574.0" y1="3" x2="574.0" y2="32" stroke="#6a6a6a" stroke-width="1.2"/><rect x="572.2" y="9" width="3.6" height="16" fill="#7a7a7a"/>
<line x1="852.0" y1="3" x2="852.0" y2="32" stroke="#6a6a6a" stroke-width="1.2"/><rect x="850.2" y="9" width="3.6" height="16" fill="#7a7a7a"/>
<line x1="1019.0" y1="3" x2="1019.0" y2="32" stroke="#6a6a6a" stroke-width="1.2"/><rect x="1017.2" y="9" width="3.6" height="16" fill="#7a7a7a"/>
<line x1="1075.0" y1="3" x2="1075.0" y2="32" stroke="#6a6a6a" stroke-width="1.2"/><rect x="1073.2" y="9" width="3.6" height="16" fill="#7a7a7a"/>
<line x1="1205.5" y1="3" x2="1205.5" y2="32" stroke="#6a6a6a" stroke-width="1.2"/><rect x="1203.7" y="9" width="3.6" height="16" fill="#7a7a7a"/>
<rect x="307.0" y="0" width="34.5" height="34.5" fill="#4c86b6"/>
<rect x="622.0" y="0" width="35.5" height="34.5" fill="#4c86b6"/>
<rect x="733.0" y="0" width="35.0" height="34.5" fill="#4c86b6"/>
<rect x="418.5" y="0.5" width="34" height="33" rx="1.5" fill="#3f3f3f" stroke="#333" stroke-width="1"/>
<rect x="974.8" y="0.5" width="33.6" height="33" rx="1.5" fill="#434343" stroke="#343434" stroke-width="1"/>
<g transform="translate(32.0 8.7) scale(1.03)"><rect x="0" y="1.5" width="19" height="12.5" rx="1.5" fill="#d0d0d0"/><polygon points="20,7.8 27.5,1 27.5,14.5" fill="#d0d0d0"/></g>
<g transform="translate(69.5 4.0) scale(0.96)"><rect x="0" y="1.5" width="19" height="12.5" rx="1.5" fill="#d0d0d0"/><polygon points="20,7.8 27.5,1 27.5,14.5" fill="#d0d0d0"/></g>
<path d="M73.6 19 v-3.2 a3.1 3.1 0 0 1 6.2 0 v3.2" fill="none" stroke="#3b3b3b" stroke-width="5.6"/>
<rect x="69.6" y="18.2" width="14" height="12.2" rx="1.2" fill="#45b4c4" stroke="#3b3b3b" stroke-width="1.4"/>
<path d="M73.6 19 v-3.2 a3.1 3.1 0 0 1 6.2 0 v3.2" fill="none" stroke="#45b4c4" stroke-width="2.6"/>
<circle cx="76.6" cy="23.4" r="1.7" fill="#3b3b3b"/><rect x="75.9" y="24" width="1.4" height="3.2" fill="#3b3b3b"/>
<g transform="translate(106.0 4.0) scale(0.99)"><rect x="0" y="1.5" width="19" height="12.5" rx="1.5" fill="#d0d0d0"/><polygon points="20,7.8 27.5,1 27.5,14.5" fill="#d0d0d0"/></g>
<g transform="translate(115.3 21)"><circle r="10" fill="#3b3b3b"/>
<polygon points="8.9,-1.2 8.9,1.2 6.2,1.7 5.5,3.2 7.1,5.5 5.5,7.1 3.2,5.5 1.7,6.2 1.2,8.9 -1.2,8.9 -1.7,6.2 -3.2,5.5 -5.5,7.1 -7.1,5.5 -5.5,3.2 -6.2,1.7 -8.9,1.2 -8.9,-1.2 -6.2,-1.7 -5.5,-3.2 -7.1,-5.5 -5.5,-7.1 -3.2,-5.5 -1.7,-6.2 -1.2,-8.9 1.2,-8.9 1.7,-6.2 3.2,-5.5 5.5,-7.1 7.1,-5.5 5.5,-3.2 6.2,-1.7" fill="#45b4c4"/><circle r="3.1" fill="#3b3b3b"/></g>
<polygon points="151,5.5 164.4,5.5 164.4,28 157.7,20.4 151,28" fill="#d0d0d0"/>
<polygon points="181,29.5 186.5,23.5 190.5,23.5 185.5,29.5" fill="#d0d0d0"/><polygon points="191,29.5 203.5,29.5 208.5,19.5 198,19.5" fill="#d0d0d0"/><path d="M196 25.5 h8.5 M194 28 h8.5 M198 22.5 h8" stroke="#3b3b3b" stroke-width="1.3"/>
<polygon points="188.3,14 198.6,3.8 199.2,19 189.8,29.2" fill="#45b4c4" stroke="#3b3b3b" stroke-width="0.8"/>
<path d="M230 3.5 l4 5 h-2.6 v5.5 h-2.8 v-5.5 h-2.6z M219 17 l5-4 v2.6 h6.5 v2.8 h-6.5 v2.6z" fill="#d0d0d0"/><circle cx="237" cy="18" r="5.4" fill="none" stroke="#45b4c4" stroke-width="2.4"/><line x1="233.3" y1="22" x2="228.5" y2="27.5" stroke="#45b4c4" stroke-width="3.2" stroke-linecap="round"/>
<polygon points="262,20.5 274.5,6 279,9.5 266.5,24" fill="#d0d0d0"/><polygon points="262,20.5 266.5,24 259.5,27.5 257,25.5" fill="#45b4c4"/><path d="M266 27.5 q6 2 9 -1 q2.5 -3 1 -6" fill="none" stroke="#d0d0d0" stroke-width="1.6"/>
<rect x="315.5" y="8" width="18" height="18" fill="#353535" stroke="#e8e8e8" stroke-width="1.8"/><path d="M321.5 8v18 M327.5 8v18 M315.5 14h18 M315.5 20h18" stroke="#e8e8e8" stroke-width="1.6" fill="none"/>
<rect x="349.5" y="8" width="24" height="19" fill="#353535" stroke="#d0d0d0" stroke-width="1.6"/><path d="M350 11.2h23 M350 23.8h23" stroke="#d0d0d0" stroke-width="2" stroke-dasharray="2.2 1.6" fill="none"/>
<rect x="387" y="8.5" width="23" height="18" fill="#353535" stroke="#d0d0d0" stroke-width="1.7"/><circle cx="398.5" cy="17.5" r="5.6" fill="#45b4c4"/>
<rect x="423.5" y="6.5" width="24.5" height="20.5" fill="#4b4b4b"/><circle cx="435.7" cy="16.7" r="5.8" fill="#3a3a3a"/>
<rect x="460.5" y="8" width="24" height="19" fill="#353535" stroke="#d0d0d0" stroke-width="1.6"/><path d="M463 12.5h19 M463 22.5h19 M472.5 9v17" stroke="#45b4c4" stroke-width="1.8" stroke-dasharray="3 1.5" fill="none"/><rect x="464" y="14" width="3" height="7" fill="#45b4c4"/><rect x="478" y="14" width="3" height="7" fill="#45b4c4"/>
<rect x="497.5" y="8" width="23.5" height="19" fill="#353535" stroke="#d0d0d0" stroke-width="1.6"/><polygon points="501,23.5 507,15.5 513,23.5" fill="#45b4c4"/><circle cx="513.5" cy="14.5" r="3.4" fill="#45b4c4"/>
<rect x="534.5" y="8" width="24" height="19" fill="#353535" stroke="#d0d0d0" stroke-width="1.6"/><path d="M541 11.5h11v3h-1l-.6-1.4h-2.6v9.4l1.6.5v.8h-5.8v-.8l1.6-.5v-9.4h-2.6l-.6 1.4h-1z" fill="#45b4c4"/>
<polygon points="603.0,4.3 614.7,10.8 603.0,17.3 591.3,10.8" fill="none" stroke="#d0d0d0" stroke-width="1.7" stroke-linejoin="round"/>
<polygon points="591.3,10.8 603.0,17.3 603.0,30.3 591.3,23.8" fill="none" stroke="#d0d0d0" stroke-width="1.7" stroke-linejoin="round"/>
<polygon points="614.7,10.8 603.0,17.3 603.0,30.3 614.7,23.8" fill="none" stroke="#d0d0d0" stroke-width="1.7" stroke-linejoin="round"/>
<path d="M603 4.5v8 M603 17 l-7 5 M603 17 l7 5" stroke="#777" stroke-width="1.2" fill="none" stroke-dasharray="2 1.5"/>
<polygon points="639.7,3.9 651.8,10.6 639.7,17.3 627.6,10.6" fill="#7fdde6" stroke="#1d1d1d" stroke-width="1.5" stroke-linejoin="round"/>
<polygon points="627.6,10.6 639.7,17.3 639.7,30.7 627.6,24.0" fill="#4fc0cf" stroke="#1d1d1d" stroke-width="1.5" stroke-linejoin="round"/>
<polygon points="651.8,10.6 639.7,17.3 639.7,30.7 651.8,24.0" fill="#3aa9ba" stroke="#1d1d1d" stroke-width="1.5" stroke-linejoin="round"/>
<circle cx="676" cy="17.5" r="11.2" fill="#d0d0d0"/><clipPath id="hc"><path d="M676 6.3 a11.2 11.2 0 0 1 0 22.4z"/></clipPath><g clip-path="url(#hc)"><rect x="676" y="6" width="12" height="23" fill="#e0e0e0"/>
<rect x="676.0" y="4.7" width="3.6" height="3.6" fill="#222"/>
<rect x="676.0" y="11.9" width="3.6" height="3.6" fill="#222"/>
<rect x="676.0" y="19.1" width="3.6" height="3.6" fill="#222"/>
<rect x="676.0" y="26.3" width="3.6" height="3.6" fill="#222"/>
<rect x="679.6" y="8.3" width="3.6" height="3.6" fill="#222"/>
<rect x="679.6" y="15.5" width="3.6" height="3.6" fill="#222"/>
<rect x="679.6" y="22.7" width="3.6" height="3.6" fill="#222"/>
<rect x="679.6" y="29.9" width="3.6" height="3.6" fill="#222"/>
<rect x="683.2" y="4.7" width="3.6" height="3.6" fill="#222"/>
<rect x="683.2" y="11.9" width="3.6" height="3.6" fill="#222"/>
<rect x="683.2" y="19.1" width="3.6" height="3.6" fill="#222"/>
<rect x="683.2" y="26.3" width="3.6" height="3.6" fill="#222"/>
<rect x="686.8" y="8.3" width="3.6" height="3.6" fill="#222"/>
<rect x="686.8" y="15.5" width="3.6" height="3.6" fill="#222"/>
<rect x="686.8" y="22.7" width="3.6" height="3.6" fill="#222"/>
<rect x="686.8" y="29.9" width="3.6" height="3.6" fill="#222"/>
</g>
<polygon points="713.0,4.3 724.7,10.8 713.0,17.3 701.3,10.8" fill="none" stroke="#d0d0d0" stroke-width="1.7" stroke-linejoin="round"/>
<polygon points="701.3,10.8 713.0,17.3 713.0,30.3 701.3,23.8" fill="none" stroke="#d0d0d0" stroke-width="1.7" stroke-linejoin="round"/>
<polygon points="724.7,10.8 713.0,17.3 713.0,30.3 724.7,23.8" fill="none" stroke="#d0d0d0" stroke-width="1.7" stroke-linejoin="round"/>
<polygon points="713,9 720,12.8 713,16.5 706,12.8" fill="#7fdde6"/><polygon points="705,17 711,20.2 711,27.5 705,24" fill="#45b4c4"/><polygon points="721,17 715,20.2 715,27.5 721,24" fill="#45b4c4"/>
<clipPath id="cs"><circle cx="750.5" cy="17.3" r="12"/></clipPath><circle cx="750.5" cy="17.3" r="12.6" fill="#1f1f1f"/><g clip-path="url(#cs)"><rect x="738" y="5" width="25" height="25" fill="#d9cfc6"/>
<rect x="737.3" y="4.1" width="4.4" height="4.4" fill="#222"/>
<rect x="737.3" y="12.9" width="4.4" height="4.4" fill="#222"/>
<rect x="737.3" y="21.7" width="4.4" height="4.4" fill="#222"/>
<rect x="737.3" y="30.5" width="4.4" height="4.4" fill="#222"/>
<rect x="741.7" y="8.5" width="4.4" height="4.4" fill="#222"/>
<rect x="741.7" y="17.3" width="4.4" height="4.4" fill="#222"/>
<rect x="741.7" y="26.1" width="4.4" height="4.4" fill="#222"/>
<rect x="746.1" y="4.1" width="4.4" height="4.4" fill="#222"/>
<rect x="746.1" y="12.9" width="4.4" height="4.4" fill="#222"/>
<rect x="746.1" y="21.7" width="4.4" height="4.4" fill="#222"/>
<rect x="746.1" y="30.5" width="4.4" height="4.4" fill="#222"/>
<rect x="750.5" y="8.5" width="4.4" height="4.4" fill="#222"/>
<rect x="750.5" y="17.3" width="4.4" height="4.4" fill="#222"/>
<rect x="750.5" y="26.1" width="4.4" height="4.4" fill="#222"/>
<rect x="754.9" y="4.1" width="4.4" height="4.4" fill="#222"/>
<rect x="754.9" y="12.9" width="4.4" height="4.4" fill="#222"/>
<rect x="754.9" y="21.7" width="4.4" height="4.4" fill="#222"/>
<rect x="754.9" y="30.5" width="4.4" height="4.4" fill="#222"/>
<rect x="759.3" y="8.5" width="4.4" height="4.4" fill="#222"/>
<rect x="759.3" y="17.3" width="4.4" height="4.4" fill="#222"/>
<rect x="759.3" y="26.1" width="4.4" height="4.4" fill="#222"/>
<rect x="763.7" y="4.1" width="4.4" height="4.4" fill="#222"/>
<rect x="763.7" y="12.9" width="4.4" height="4.4" fill="#222"/>
<rect x="763.7" y="21.7" width="4.4" height="4.4" fill="#222"/>
<rect x="763.7" y="30.5" width="4.4" height="4.4" fill="#222"/>
</g>
<path d="M787.5 8.5 a6 6 0 0 1 3.4 11 l-.6 3.2 h-5.6 l-.6-3.2 a6 6 0 0 1 3.4-11z" fill="#d0d0d0"/><rect x="785" y="24" width="5" height="2.2" fill="#d0d0d0"/><rect x="785.8" y="27" width="3.4" height="2" fill="#d0d0d0"/><path d="M787.5 2.5v3.5 M779 6.5l2.4 2.4 M796 6.5l-2.4 2.4 M776 15h3.4 M795.6 15h3.4" stroke="#d0d0d0" stroke-width="1.5" fill="none"/>
<polygon points="811,21.5 826,19 831,23.5 816,26.5" fill="#d0d0d0"/><path d="M814 24l4-4 M818 25l4-5 M822 25l4-5" stroke="#3b3b3b" stroke-width="1.2"/><circle cx="829" cy="15.5" r="9" fill="#45b4c4"/>
<polygon points="869,24 884,21.5 892,25.5 877,28.5" fill="#45b4c4"/><path d="M872 26.5l4-4 M876 27.5l4-5 M880 27.5l4-5 M884 26.5l4-4" stroke="#3b3b3b" stroke-width="1.1"/><circle cx="881" cy="14.5" r="9.2" fill="#d0d0d0"/><path d="M873 18 a9 9 0 0 0 15 2" stroke="#999" stroke-width="2" fill="none"/>
<circle cx="914" cy="22.5" r="7.6" fill="#555"/><circle cx="917" cy="18.5" r="7.6" fill="#777"/><circle cx="922" cy="13" r="7.8" fill="#d0d0d0"/>
<path d="M956.5 7.2 a9.8 9.8 0 1 0 0 19.6" fill="none" stroke="#45b4c4" stroke-width="4.4"/>
<rect x="956.0" y="5.3" width="3.8" height="3.8" fill="#e4e4e4" stroke="#3b3b3b" stroke-width="0.6"/>
<rect x="960.2" y="8.9" width="3.8" height="3.8" fill="#e4e4e4" stroke="#3b3b3b" stroke-width="0.6"/>
<rect x="963.8" y="12.6" width="3.8" height="8.8" fill="#e4e4e4" stroke="#3b3b3b" stroke-width="0.6"/>
<rect x="960.2" y="21.3" width="3.8" height="3.8" fill="#e4e4e4" stroke="#3b3b3b" stroke-width="0.6"/>
<rect x="956.0" y="24.9" width="3.8" height="3.8" fill="#e4e4e4" stroke="#3b3b3b" stroke-width="0.6"/>
<rect x="980.3" y="6.3" width="10.5" height="8" fill="#3a4a4c"/><rect x="988" y="12" width="15.5" height="15.4" fill="#3d5457"/>
<rect x="1036.2" y="6.8" width="17" height="14.8" fill="none" stroke="#45b4c4" stroke-width="2" stroke-dasharray="4.2 2.2"/><polygon points="1051.2,11.8 1051.2,28.5 1055,25.2 1057.6,30.3 1060.2,29 1057.7,24.2 1062.5,23.6" fill="#d0d0d0" stroke="#3b3b3b" stroke-width="0.8"/>
<rect x="1090" y="2" width="29.5" height="30.5" fill="#353535"/><rect x="1126.5" y="2" width="29.5" height="30.5" fill="#353535"/>
<rect x="1101" y="6.8" width="14" height="13.2" fill="none" stroke="#d0d0d0" stroke-width="2.4"/><rect x="1092.8" y="12.7" width="17" height="15.4" fill="#dcdcdc"/><rect x="1099.8" y="12.7" width="10" height="8.4" fill="#c4c4c4" stroke="#353535" stroke-width="1.2"/>
<rect x="1138.2" y="6.8" width="14" height="13.8" fill="none" stroke="#d0d0d0" stroke-width="2.4"/><rect x="1141.6" y="10.8" width="6.4" height="6.6" fill="#d0d0d0"/><path d="M1131.8 12.7 V26.3 H1148" fill="none" stroke="#dcdcdc" stroke-width="3.6"/>
<rect x="1168.5" y="6.8" width="20.8" height="20.8" fill="#2e2e2e" stroke="#d0d0d0" stroke-width="2.4"/><circle cx="1174" cy="12.8" r="3" fill="#d0d0d0"/><polygon points="1175.2,15.6 1177.4,13.4 1186,25.6" fill="#d0d0d0"/>
<circle cx="1237" cy="17" r="12.2" fill="#d0d0d0"/>
<line x1="1242.0" y1="19.9" x2="1229.6" y2="27.1" stroke="#3b3b3b" stroke-width="2"/>
<line x1="1237.0" y1="22.8" x2="1224.6" y2="15.6" stroke="#3b3b3b" stroke-width="2"/>
<line x1="1232.0" y1="19.9" x2="1232.0" y2="5.6" stroke="#3b3b3b" stroke-width="2"/>
<line x1="1232.0" y1="14.1" x2="1244.4" y2="6.9" stroke="#3b3b3b" stroke-width="2"/>
<line x1="1237.0" y1="11.2" x2="1249.4" y2="18.4" stroke="#3b3b3b" stroke-width="2"/>
<line x1="1242.0" y1="14.1" x2="1242.0" y2="28.4" stroke="#3b3b3b" stroke-width="2"/>
<polygon points="1237.0,22.8 1232.0,19.9 1232.0,14.1 1237.0,11.2 1242.0,14.1 1242.0,19.9" fill="#3b3b3b"/>
<rect x="1257.5" y="1.3" width="75" height="28.5" rx="2.5" fill="#2b2b2b"/>
<rect x="1376" y="1.3" width="50" height="28.5" rx="2.5" fill="#2b2b2b"/>
<text x="1266" y="25.4" font-family="Liberation Sans, sans-serif" font-size="22" letter-spacing="-1.1" fill="#cdcdcd">0.00</text>
<text x="1385" y="25.4" font-family="Liberation Sans, sans-serif" font-size="22" letter-spacing="-1.1" fill="#cdcdcd">1.00</text>
<rect x="1353.8" y="5" width="13.2" height="24" fill="#d0d0d0"/><circle cx="1353.5" cy="17" r="8.8" fill="#3b3b3b"/><path d="M1353.5 8.2 a8.8 8.8 0 0 0 0 17.6z" fill="#d0d0d0"/>
</svg>
<div class="hr" style="top:38.7px"><span class="hl">Verts:</span><span class="hv" style="right:1661px">60538</span><span class="hv" style="right:1535px">60538</span><span class="hv" style="right:1404px">0</span></div>
<div class="hr" style="top:77.6px"><span class="hl">Edges:</span><span class="hv" style="right:1661px">121082</span><span class="hv" style="right:1535px">121082</span><span class="hv" style="right:1404px">0</span></div>
<div class="hr" style="top:116.3px"><span class="hl">Faces:</span><span class="hv" style="right:1661px">60766</span><span class="hv" style="right:1535px">60766</span><span class="hv" style="right:1404px">0</span></div>
<div class="hr" style="top:155.3px"><span class="hl">Tris:</span><span class="hv" style="right:1661px">118352</span><span class="hv" style="right:1535px">118352</span><span class="hv" style="right:1404px">0</span></div>
<div class="hr" style="top:194.1px"><span class="hl">UVs:</span><span class="hv" style="right:1661px">81040</span><span class="hv" style="right:1535px">81040</span><span class="hv" style="right:1404px">0</span></div>

<div id="persp">persp</div>
<div style="position:absolute;left:1421.6px;top:0;width:1.4px;height:949px;background:#3c3c3c"></div>
<style>
#ol{position:absolute;left:1423px;top:0;width:497px;height:949px;background:#3c3c3c;border-bottom:2.5px solid #2c2c2c;overflow:hidden;font-family:"Liberation Sans",sans-serif;}
#olt{position:absolute;left:0;top:0;width:497px;height:50px;background:#ffffff;}
#olt .ttl{position:absolute;left:48px;top:9.7px;font-size:22.5px;line-height:30px;color:#8a8a8a;letter-spacing:0.9px;white-space:nowrap;}
.mn{position:absolute;top:60.6px;font-size:21px;line-height:28px;color:#d6d6d6;white-space:nowrap;}
#srch{position:absolute;left:57px;top:102.5px;width:445px;height:35.5px;background:#232323;border-radius:3px;}
#srch span{position:absolute;left:5.5px;top:5.4px;font-size:21px;line-height:28px;color:#9d9d9d;white-space:nowrap;letter-spacing:-0.87px;}
#lst{position:absolute;left:5.5px;top:146px;width:492px;height:783.8px;background:#2c2c2c;}
.row{position:absolute;left:0;width:476px;height:39px;}
.row .t{position:absolute;top:7.8px;font-size:21px;line-height:28px;color:#c9c9c9;white-space:nowrap;}
.row.sel{background:#4b80a4;} .row.sel .t{color:#ffffff;}
.row.par{background:#3a4554;}
</style>
<div id="ol">
<div id="olt"><span class="ttl">Outliner</span>
<svg style="position:absolute;left:0;top:0" width="497" height="50" viewBox="0 0 497 50">
<defs><linearGradient id="mbg" x1="0" y1="0" x2="1" y2="1"><stop offset="0" stop-color="#bfd5d8"/><stop offset="0.5" stop-color="#d6e9eb"/><stop offset="1" stop-color="#e2f0f1"/></linearGradient>
<linearGradient id="mfg" x1="0" y1="0" x2="1" y2="0"><stop offset="0" stop-color="#157a86"/><stop offset="0.5" stop-color="#2aa0a8"/><stop offset="1" stop-color="#1a8f96"/></linearGradient></defs>
<rect x="13" y="7" width="30.4" height="30.2" fill="url(#mbg)"/>
<path d="M17 29.6 V10 h5 l6 11.5 l6 -11.5 h5.2 V29.6 h-4.8 V17.6 l-4.9 9.6 h-3 l-4.9 -9.6 V29.6z" fill="url(#mfg)"/>
<path d="M22 10 l6 11.5 l-1.6 5.7 l-4.8 -9.6z" fill="#5aa7b4" opacity="0.8"/>
<text x="31.8" y="35" font-family="Liberation Sans, sans-serif" font-size="4.4" font-weight="bold" fill="#1e9aa0" text-anchor="middle" letter-spacing="0.2">MAYA</text>
<line x1="275" y1="22.3" x2="294.5" y2="22.3" stroke="#8b8b8b" stroke-width="1.6"/>
<rect x="364.5" y="13.3" width="18.4" height="18" fill="none" stroke="#8b8b8b" stroke-width="1.6"/>
<path d="M454.5 13 l19 19 M473.5 13 l-19 19" stroke="#8b8b8b" stroke-width="1.6" fill="none"/>
</svg></div>
<span class="mn" id="m1" style="left:20px">Display</span><span class="mn" id="m2" style="left:119px;letter-spacing:-0.2px">Show</span><span class="mn" id="m3" style="left:201.5px">Help</span>
<svg style="position:absolute;left:10px;top:104px" width="40" height="38" viewBox="0 0 40 38">
<g fill="#6a6a6a"><polygon points="4.1,3.4 4.1,14 13.5,8.8"/><polygon points="24.1,3.4 24.1,14 32.9,8.8"/><polygon points="4.1,23.1 4.1,33.7 13.5,28.5"/><polygon points="24.1,23.1 24.1,33.7 32.9,28.5"/>
<rect x="10.3" y="3.1" width="11.5" height="1.7"/><rect x="10.3" y="32.3" width="11.5" height="1.7"/><rect x="8" y="14" width="1.9" height="9.1"/><rect x="28" y="14" width="1.9" height="9.1"/></g></svg>
<div id="srch"><span>Search...</span></div>
<svg style="position:absolute;left:477px;top:114px" width="20" height="16" viewBox="0 0 20 16"><polygon points="0.6,3.2 20,3.2 20,5.5 11.2,13.3" fill="#c4c4c4"/></svg>
<div id="lst">
<div class="row" style="top:-1.0px"><svg style="position:absolute;left:68.5px;top:12.3px" width="30" height="18" viewBox="0 0 30 18"><rect x="0" y="1" width="19" height="14" rx="1" fill="#d0d0d0"/><polygon points="20.3,8 27.6,1 27.6,15.5" fill="#d0d0d0"/></svg><span class="t" style="left:105px;letter-spacing:-0.26px">persp</span></div>
<div class="row" style="top:38.0px"><svg style="position:absolute;left:68.5px;top:12.3px" width="30" height="18" viewBox="0 0 30 18"><rect x="0" y="1" width="19" height="14" rx="1" fill="#d0d0d0"/><polygon points="20.3,8 27.6,1 27.6,15.5" fill="#d0d0d0"/></svg><span class="t" style="left:105px;letter-spacing:0.73px">top</span></div>
<div class="row" style="top:77.0px"><svg style="position:absolute;left:68.5px;top:12.3px" width="30" height="18" viewBox="0 0 30 18"><rect x="0" y="1" width="19" height="14" rx="1" fill="#d0d0d0"/><polygon points="20.3,8 27.6,1 27.6,15.5" fill="#d0d0d0"/></svg><span class="t" style="left:105px;letter-spacing:0.72px">front</span></div>
<div class="row" style="top:116.0px"><svg style="position:absolute;left:68.5px;top:12.3px" width="30" height="18" viewBox="0 0 30 18"><rect x="0" y="1" width="19" height="14" rx="1" fill="#d0d0d0"/><polygon points="20.3,8 27.6,1 27.6,15.5" fill="#d0d0d0"/></svg><span class="t" style="left:105px;letter-spacing:-0.20px">side</span></div>
<div class="row par" style="top:155.2px"><svg style="position:absolute;left:38px;top:5.8px" width="64" height="32" viewBox="0 0 64 32"><rect x="4" y="5.2" width="18" height="18" fill="none" stroke="#9aa1a8" stroke-width="1.5"/><line x1="7.5" y1="14.2" x2="18.5" y2="14.2" stroke="#b4b8bc" stroke-width="1.6"/><polygon points="39.5,0.8 60.6,0.8 50.6,27.6 29.4,27.6" fill="#d6d6d6" stroke="#242424" stroke-width="1.2"/><path d="M29.4 12.4 h15" stroke="#e23030" stroke-width="2.4"/><polygon points="43.4,7 53.2,12.4 43.4,17.8" fill="#e23030"/></svg><span class="t" style="left:105.5px;letter-spacing:-0.16px">Container1</span></div>
<div class="row sel" style="top:194.0px"><svg style="position:absolute;left:85.6px;top:4.8px" width="41" height="30" viewBox="0 0 41 30"><g stroke="#2a2a2a" stroke-width="1.5" fill="#d4d4d4" stroke-linejoin="round"><polygon points="20.5,2.3 38.2,14.7 20.5,27.2 2.8,14.7"/></g><path d="M11.6 8.5 L29.4 21 M29.4 8.5 L11.6 21" stroke="#2a2a2a" stroke-width="1.5"/></svg><span class="t" style="left:129px;letter-spacing:-0.15px">WhiteParts</span></div>
<div class="row sel" style="top:233.0px"><svg style="position:absolute;left:85.6px;top:4.8px" width="41" height="30" viewBox="0 0 41 30"><g stroke="#2a2a2a" stroke-width="1.5" fill="#d4d4d4" stroke-linejoin="round"><polygon points="20.5,2.3 38.2,14.7 20.5,27.2 2.8,14.7"/></g><path d="M11.6 8.5 L29.4 21 M29.4 8.5 L11.6 21" stroke="#2a2a2a" stroke-width="1.5"/></svg><span class="t" style="left:129px;letter-spacing:-0.20px">ContainerParts1</span></div>
<svg style="position:absolute;left:40px;top:182.5px" width="40" height="80" viewBox="0 0 40 80"><path d="M11 1.5 V70.5 H30 M11 31.5 H30" fill="none" stroke="#8e9aa4" stroke-width="1.4"/><circle cx="30" cy="31.5" r="3.4" fill="#9aa3aa"/><circle cx="30" cy="70.5" r="3.4" fill="#9aa3aa"/></svg>
<div class="row" style="top:272.0px"><svg style="position:absolute;left:66px;top:2.6px" width="34" height="34" viewBox="0 0 34 34"><circle cx="16.7" cy="17" r="14.5" fill="#2c2c2c" stroke="#d2d2d2" stroke-width="2.2"/><path d="M15.6 7.8 h9.6 v14.4 h-6 z" fill="#45b4c4"/><circle cx="12.6" cy="20" r="6.6" fill="#d4d4d4" stroke="#2c2c2c" stroke-width="1.2"/></svg><span class="t" style="left:104.5px;letter-spacing:0.26px">defaultLightSet</span></div>
<div class="row" style="top:311.0px"><svg style="position:absolute;left:66px;top:2.6px" width="34" height="34" viewBox="0 0 34 34"><circle cx="16.7" cy="17" r="14.5" fill="#2c2c2c" stroke="#d2d2d2" stroke-width="2.2"/><path d="M15.6 7.8 h9.6 v14.4 h-6 z" fill="#45b4c4"/><circle cx="12.6" cy="20" r="6.6" fill="#d4d4d4" stroke="#2c2c2c" stroke-width="1.2"/></svg><span class="t" style="left:104.5px;letter-spacing:0.23px">defaultObjectSet</span></div>
</div>
<svg style="position:absolute;left:0;top:140px" width="497" height="807" viewBox="0 140 497 807">
<polygon points="484,161.5 492.4,152.7 497,157.5 497,161.5" fill="#c4c4c4"/>
<path d="M482.4 175.7 a5 5 0 0 1 5-5 h10 v711.3 h-10 a5 5 0 0 1 -5 -5z" fill="#5a5a5a"/>
<polygon points="483.8,889.6 497,889.6 497,894.5 493.3,898.3" fill="#c4c4c4"/>
<polygon points="21.5,910.5 21.5,927 12,918.7" fill="#c4c4c4"/>
<rect x="30" y="908.3" width="427" height="21.2" rx="6" fill="#595959"/>
<polygon points="463.5,910.5 463.5,927 473,918.7" fill="#c4c4c4"/>
<line x1="170" y1="935.5" x2="337" y2="935.5" stroke="#8a8a8a" stroke-width="1.6" stroke-dasharray="1.6 4.3"/>
</svg>
</div>
</div>
</body></html>
